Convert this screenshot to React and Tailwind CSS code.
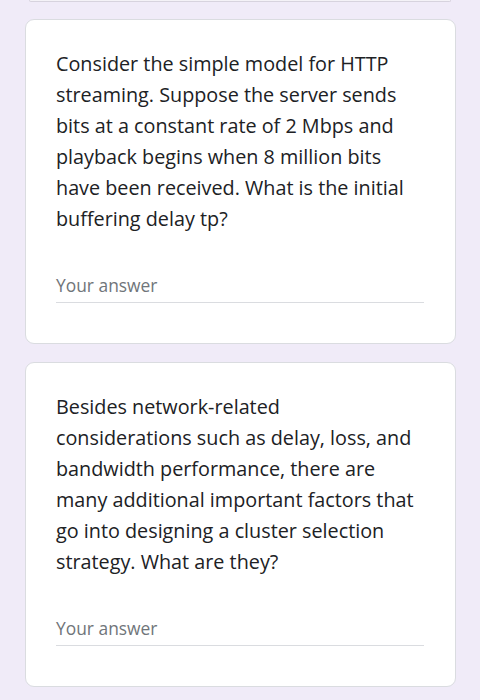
export default function App() {
  const font = { fontFamily: '"Open Sans", "Noto Sans", sans-serif' };
  return (
    <div className="min-h-[700px] w-[480px] bg-[#f0ebf8] overflow-hidden" style={font}>
      <div className="mx-[29px] h-[2px] border-b border-x border-[#d7d3de] bg-[#f4f2f7] rounded-b-[2px]" />
      <div className="flex flex-col gap-[18px] mt-[17px] mx-[25px] w-[431px]">
        <Card
          lines={[
            "Consider the simple model for HTTP",
            "streaming. Suppose the server sends",
            "bits at a constant rate of 2 Mbps and",
            "playback begins when 8 million bits",
            "have been received. What is the initial",
            "buffering delay tp?",
          ]}
        />
        <Card
          lines={[
            "Besides network-related",
            "considerations such as delay, loss, and",
            "bandwidth performance, there are",
            "many additional important factors that",
            "go into designing a cluster selection",
            "strategy. What are they?",
          ]}
        />
      </div>
    </div>
  );
}

function Card({ lines }) {
  return (
    <div className="bg-white border border-[#dadce0] rounded-[9px] pt-[28px] pb-[40px] pl-[30px] pr-[31px]">
      <div className="text-[19.8px] leading-[31px] text-[#202124]">
        {lines.map((l, i) => (
          <div key={i} className="whitespace-nowrap">{l}</div>
        ))}
      </div>
      <div className="mt-[39px] pb-[5px] border-b border-[#dadce0] text-[17.4px] leading-[24px] text-[#70757a]">
        Your answer
      </div>
    </div>
  );
}
